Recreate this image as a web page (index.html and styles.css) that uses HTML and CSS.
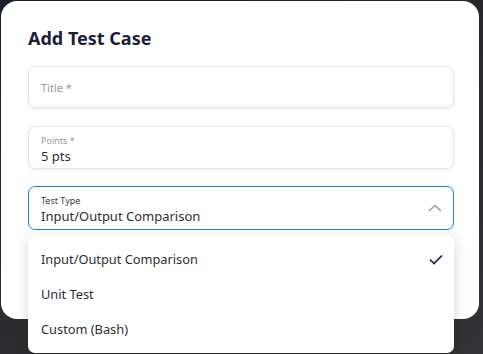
FILE: index.html
```html
<!DOCTYPE html>
<html lang="en">
<head>
  <meta charset="UTF-8" />
  <meta name="viewport" content="width=device-width, initial-scale=1.0"/>
  <title>Add Test Case</title>
  <link rel="stylesheet" href="styles.css">
</head>
<body>

  <div class="backdrop">
    <div class="modal">
      <h2>Add Test Case</h2>

      <div class="field field-title">
        <span class="placeholder">Title *</span>
      </div>

      <div class="field field-points">
        <span class="label">Points *</span>
        <span class="value">5 pts</span>
      </div>

      <div class="field field-type focused">
        <span class="label dark">Test Type</span>
        <span class="value">Input/Output Comparison</span>
        <svg class="chevron" width="14" height="8" viewBox="0 0 14 8">
          <polyline points="1,7 7,1.5 13,7" fill="none" stroke="#9a9aa4" stroke-width="1.6"/>
        </svg>
      </div>
    </div>

    <ul class="menu">
      <li class="selected">
        Input/Output Comparison
        <svg class="check" width="14" height="11" viewBox="0 0 14 11">
          <polyline points="1,5.5 5,9.5 13,1.5" fill="none" stroke="#1c1f3c" stroke-width="1.7"/>
        </svg>
      </li>
      <li>Unit Test</li>
      <li>Custom (Bash)</li>
    </ul>
  </div>

</body>
</html>
```

FILE: styles.css
```css
:root {
  --navy: #1b1d3b;
  --border: #e6e6e8;
  --focus: #2f7be0;
  --muted: #9a9aa2;
  --text: #2e2e36;
}

body {
  margin: 0;
  font-family: 'Noto Sans', 'Open Sans', sans-serif;
  background: linear-gradient(160deg, #1b1f2c 0%, #29292b 40%, #333335 100%);
  height: 354px;
  overflow: hidden;
}

.backdrop {
  position: relative;
  padding: 1px 0 0 1px;
}

.modal {
  width: 478px;
  height: 318px;
  box-sizing: border-box;
  background: #fff;
  border-radius: 16px;
  padding: 24px 25px 0 27px;
}

h2 {
  margin: 0 0 15px;
  font-size: 18px;
  line-height: 26px;
  font-weight: 700;
  color: var(--navy);
}

.field {
  position: relative;
  box-sizing: border-box;
  border: 1px solid var(--border);
  border-radius: 7px;
  box-shadow: 0 1px 3px rgba(0,0,0,0.08);
  padding: 0 12px;
  display: flex;
  flex-direction: column;
  justify-content: center;
}

.field-title { height: 42px; margin-bottom: 18px; }
.field-points { height: 43px; margin-bottom: 17px; padding-top: 3px; }
.field-type { height: 44px; padding-top: 3px; }

.focused {
  border-color: var(--focus);
  box-shadow: none;
}

.placeholder {
  font-size: 11px;
  color: var(--muted);
}

.label {
  font-size: 9px;
  line-height: 14px;
  color: var(--muted);
}

.label.dark {
  color: #3a3a44;
}

.value {
  font-size: 13px;
  line-height: 17px;
  color: var(--text);
}

.chevron {
  position: absolute;
  right: 11px;
  top: 17px;
}

.menu {
  position: absolute;
  top: 235px;
  left: 28px;
  width: 426px;
  height: 118px;
  box-sizing: border-box;
  margin: 0;
  padding: 7px 0 0;
  list-style: none;
  background: #fff;
  border-radius: 7px;
  box-shadow: 0 3px 14px rgba(0,0,0,0.16);
}

.menu li {
  position: relative;
  height: 35px;
  line-height: 35px;
  padding: 0 13px;
  font-size: 12.8px;
  color: var(--text);
}

.check {
  position: absolute;
  right: 11px;
  top: 12px;
}
```
